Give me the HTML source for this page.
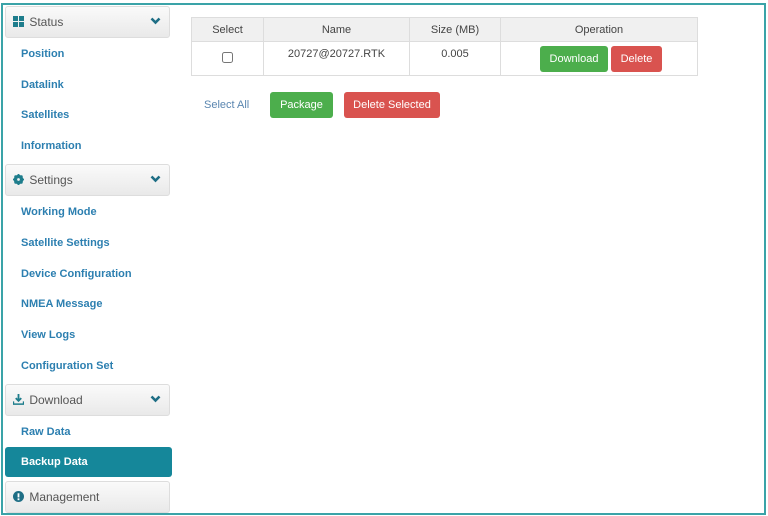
<!DOCTYPE html>
<html><head><style>
*{box-sizing:border-box;margin:0;padding:0}
body{width:768px;height:516px;background:#fff;font-family:"Liberation Sans",sans-serif;position:relative;overflow:hidden}
.frame{position:absolute;left:1px;top:3px;width:765px;height:512px;border:2px solid #3aa3a8}
.ph{position:absolute;left:5px;width:165px;height:32px;background:linear-gradient(#fafafa,#e9e9e9);border:1px solid #ddd;border-radius:3px;color:#555;font-size:12px;line-height:30px;padding-left:7px}
.ph svg.ic{vertical-align:-1px;margin-right:2px}
.ph svg.ch{position:absolute;right:8px;top:10px}
.it{position:absolute;left:21px;font-size:11px;font-weight:bold;color:#2c7fb0}
.act{position:absolute;left:5px;top:447px;width:167px;height:30px;background:#15879a;border-radius:3px;color:#fff;font-weight:bold;font-size:11px;line-height:30px;padding-left:16px}
table{position:absolute;left:191px;top:17px;border-collapse:collapse;font-size:11px;color:#444}
td,th{border:1px solid #ddd;text-align:center;font-weight:normal}
th{background:#f0f0f0;height:24px}
td{height:34px}
.b{display:inline-block;color:#fff;border-radius:3px;font-size:11px;text-align:center}
.g{background:#4cae4c}.r{background:#d9534f}
</style></head><body>
<div class="frame"></div>
<div class="ph" style="top:6px"><svg class="ic" width="11" height="11"><rect x="0" y="0" width="5" height="5" fill="#1e7d8c"/><rect x="6" y="0" width="5" height="5" fill="#1e7d8c"/><rect x="0" y="6" width="5" height="5" fill="#1e7d8c"/><rect x="6" y="6" width="5" height="5" fill="#1e7d8c"/></svg> Status<svg class="ch" width="11" height="8"><path d="M1.5 1.5 L5.5 5.5 L9.5 1.5" stroke="#1e6e85" stroke-width="2.6" fill="none"/></svg></div>
<div class="it" style="top:48px">Position</div>
<div class="it" style="top:79px">Datalink</div>
<div class="it" style="top:109px">Satellites</div>
<div class="it" style="top:140px">Information</div>
<div class="ph" style="top:164px"><svg class="ic" width="11" height="11" viewBox="0 0 12 12"><circle cx="6" cy="6" r="4" fill="none" stroke="#1e7d8c" stroke-width="2.5"/><g stroke="#1e7d8c" stroke-width="2"><path d="M6 0v12M0 6h12M1.8 1.8l8.4 8.4M10.2 1.8l-8.4 8.4"/></g><circle cx="6" cy="6" r="1.5" fill="#f2f2f2"/></svg> Settings<svg class="ch" width="11" height="8"><path d="M1.5 1.5 L5.5 5.5 L9.5 1.5" stroke="#1e6e85" stroke-width="2.6" fill="none"/></svg></div>
<div class="it" style="top:206px">Working Mode</div>
<div class="it" style="top:237px">Satellite Settings</div>
<div class="it" style="top:268px">Device Configuration</div>
<div class="it" style="top:298px">NMEA Message</div>
<div class="it" style="top:329px">View Logs</div>
<div class="it" style="top:360px">Configuration Set</div>
<div class="ph" style="top:384px"><svg class="ic" width="11" height="11" viewBox="0 0 12 12"><path d="M6 0v7M3 4.5l3 3 3-3" stroke="#1e7d8c" stroke-width="2" fill="none"/><path d="M0.5 8v3h11V8" stroke="#1e7d8c" stroke-width="1.6" fill="none"/></svg> Download<svg class="ch" width="11" height="8"><path d="M1.5 1.5 L5.5 5.5 L9.5 1.5" stroke="#1e6e85" stroke-width="2.6" fill="none"/></svg></div>
<div class="it" style="top:426px">Raw Data</div>
<div class="act">Backup Data</div>
<div class="ph" style="top:481px;height:32px"><svg class="ic" width="11" height="11" viewBox="0 0 12 12"><circle cx="6" cy="6" r="6" fill="#1e6e85"/><rect x="5" y="2.5" width="2" height="4.5" fill="#fff"/><rect x="5" y="8" width="2" height="2" fill="#fff"/></svg> Management</div>
<table>
<tr><th style="width:72px">Select</th><th style="width:146px">Name</th><th style="width:91px">Size (MB)</th><th style="width:197px">Operation</th></tr>
<tr><td><input type="checkbox" style="width:11px;height:11px"></td><td style="vertical-align:top;padding-top:6px">20727@20727.RTK</td><td style="vertical-align:top;padding-top:6px">0.005</td><td style="text-align:left;padding-left:39px"><span class="b g" style="width:68px;height:26px;line-height:26px">Download</span><span class="b r" style="width:51px;height:26px;line-height:26px;margin-left:3px">Delete</span></td></tr>
</table>
<div style="position:absolute;left:204px;top:99px;font-size:11px;color:#5a86b0">Select All</div>
<div class="b g" style="position:absolute;left:270px;top:92px;width:63px;height:26px;line-height:26px">Package</div>
<div class="b r" style="position:absolute;left:344px;top:92px;width:96px;height:26px;line-height:26px">Delete Selected</div>
</body></html>
